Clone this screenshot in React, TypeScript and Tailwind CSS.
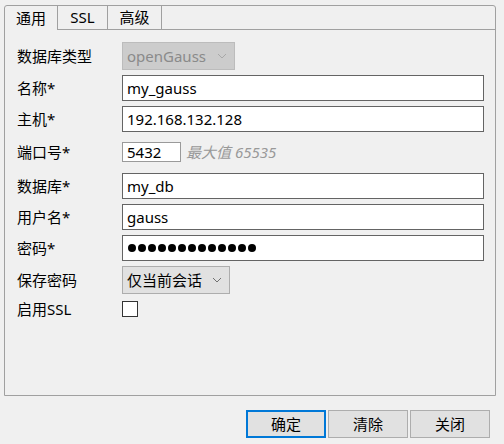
import React from 'react';

const font = { fontFamily: '"Noto Sans", "Noto Sans CJK SC", sans-serif' };

function Chevron({ color }: { color: string }) {
  return (
    <svg width="10" height="6" viewBox="0 0 10 6" className="shrink-0">
      <polyline points="1,1 5,5 9,1" fill="none" stroke={color} strokeWidth="1" />
    </svg>
  );
}

function Row({ label, className, children }: { label: string; className: string; children: React.ReactNode }) {
  return (
    <div className={`flex items-center ${className}`}>
      <div className="w-[105px] shrink-0 text-[15px] text-black">{label}</div>
      {children}
    </div>
  );
}

function TextBox({ value }: { value: string }) {
  return (
    <div className="flex h-full flex-1 items-center border border-[#646464] bg-white pl-[4px] text-[15px] text-black">
      {value}
    </div>
  );
}

export default function App() {
  return (
    <div className="h-[444px] w-[504px] bg-[#f0f0f0] pt-[5px]" style={font}>
      {/* tab frame */}
      <div className="ml-[4px] flex h-[391px] w-[492px] flex-col rounded-t-[3px] border border-[#a0a0a0]">
        <div className="flex h-[24px] shrink-0">
          <div className="flex w-[53px] items-center justify-center border-r border-[#a0a0a0] text-[15px] text-black">通用</div>
          <div className="flex w-[50px] items-center justify-center border-b border-r border-[#a0a0a0] text-[15px] text-black">SSL</div>
          <div className="flex w-[54px] items-center justify-center border-b border-r border-[#a0a0a0] text-[15px] text-black">高级</div>
          <div className="flex-1 border-b border-[#a0a0a0]" />
        </div>

        <div className="flex flex-col pl-[12px] pr-[11px] pt-[12px]">
          <Row label="数据库类型" className="h-[28px]">
            <div className="flex h-full w-[113px] items-center justify-between border border-[#bcbcbc] bg-[#cccccc] pl-[4px] pr-[7px] text-[15px] text-[#8a8a8a]">
              <span>openGauss</span>
              <Chevron color="#a8a8a8" />
            </div>
          </Row>
          <Row label="名称*" className="mt-[5px] h-[26px]">
            <TextBox value="my_gauss" />
          </Row>
          <Row label="主机*" className="mt-[5px] h-[26px]">
            <TextBox value="192.168.132.128" />
          </Row>
          <Row label="端口号*" className="mt-[10px] h-[20px]">
            <div className="flex h-full w-[59px] items-center border border-[#9a9a9a] bg-white pl-[4px] text-[15px] text-black">5432</div>
            <span className="ml-[5px] text-[15px] italic text-[#999999]">最大值 65535</span>
          </Row>
          <Row label="数据库*" className="mt-[11px] h-[26px]">
            <TextBox value="my_db" />
          </Row>
          <Row label="用户名*" className="mt-[5px] h-[26px]">
            <TextBox value="gauss" />
          </Row>
          <Row label="密码*" className="mt-[5px] h-[26px]">
            <div className="flex h-full flex-1 items-center gap-[2px] border border-[#646464] bg-white pl-[5px]">
              {Array.from({ length: 13 }).map((_, i) => (
                <span key={i} className="h-[8px] w-[8px] rounded-full bg-black" />
              ))}
            </div>
          </Row>
          <Row label="保存密码" className="mt-[5px] h-[28px]">
            <div className="flex h-full w-[108px] items-center justify-between border border-[#adadad] bg-[#e1e1e1] pl-[4px] pr-[7px] text-[15px] text-black">
              <span>仅当前会话</span>
              <Chevron color="#707070" />
            </div>
          </Row>
          <Row label="启用SSL" className="mt-[7px] h-[16px]">
            <div className="h-[16px] w-[16px] border border-[#333333] bg-white" />
          </Row>
        </div>
      </div>

      <div className="mt-[14px] flex justify-end gap-[2px] pr-[14px]">
        <button className="h-[28px] w-[80px] border-2 border-[#0078d7] bg-[#e1e1e1] text-[15px] text-black">确定</button>
        <button className="h-[28px] w-[80px] border border-[#adadad] bg-[#e1e1e1] text-[15px] text-black">清除</button>
        <button className="h-[28px] w-[80px] border border-[#adadad] bg-[#e1e1e1] text-[15px] text-black">关闭</button>
      </div>
    </div>
  );
}
